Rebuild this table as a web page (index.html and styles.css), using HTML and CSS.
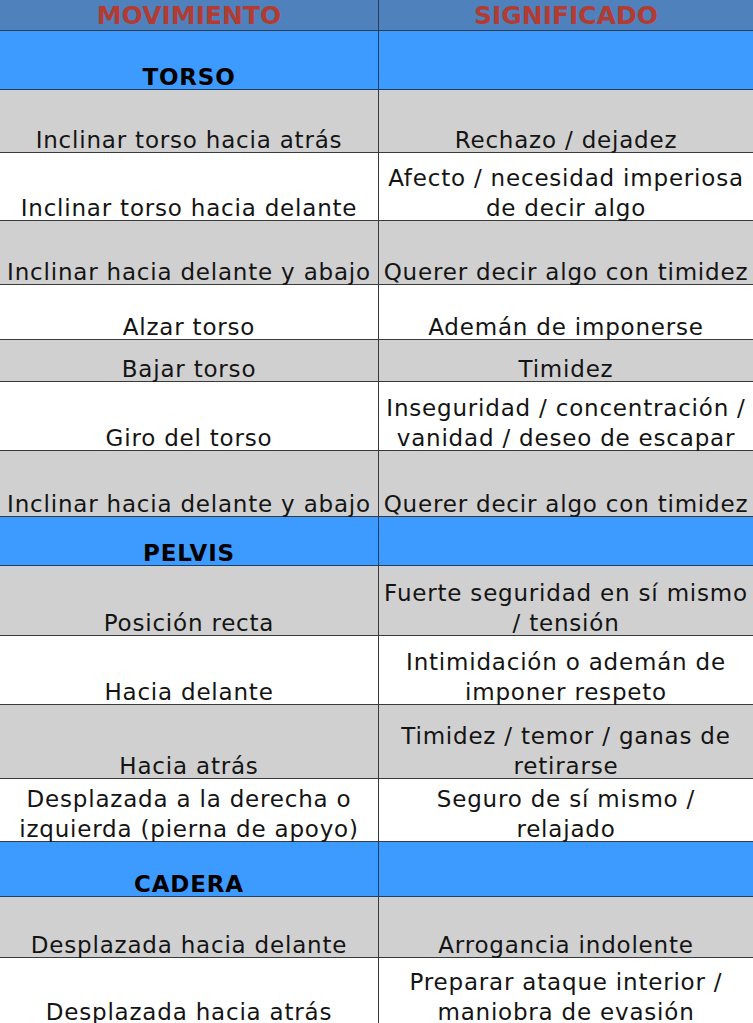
FILE: index.html
```html
<!DOCTYPE html>
<html lang="es">
<head>
<meta charset="utf-8">
<title>Movimiento y significado</title>
<link rel="stylesheet" href="styles.css">
</head>
<body>
<div class="sheet">
  <div class="row head h31">
    <div class="cell">MOVIMIENTO</div>
    <div class="cell">SIGNIFICADO</div>
  </div>
  <div class="row section h59">
    <div class="cell">TORSO</div>
    <div class="cell"></div>
  </div>
  <div class="row gray h63">
    <div class="cell">Inclinar torso hacia atrás</div>
    <div class="cell">Rechazo / dejadez</div>
  </div>
  <div class="row white h68">
    <div class="cell">Inclinar torso hacia delante</div>
    <div class="cell">Afecto / necesidad imperiosa<br>de decir algo</div>
  </div>
  <div class="row gray h64">
    <div class="cell">Inclinar hacia delante y abajo</div>
    <div class="cell">Querer decir algo con timidez</div>
  </div>
  <div class="row white h55">
    <div class="cell">Alzar torso</div>
    <div class="cell">Ademán de imponerse</div>
  </div>
  <div class="row gray h42">
    <div class="cell">Bajar torso</div>
    <div class="cell">Timidez</div>
  </div>
  <div class="row white h69">
    <div class="cell">Giro del torso</div>
    <div class="cell">Inseguridad / concentración /<br>vanidad / deseo de escapar</div>
  </div>
  <div class="row gray h66">
    <div class="cell">Inclinar hacia delante y abajo</div>
    <div class="cell">Querer decir algo con timidez</div>
  </div>
  <div class="row section h49">
    <div class="cell">PELVIS</div>
    <div class="cell"></div>
  </div>
  <div class="row gray h70">
    <div class="cell">Posición recta</div>
    <div class="cell">Fuerte seguridad en sí mismo<br>/ tensión</div>
  </div>
  <div class="row white h69">
    <div class="cell">Hacia delante</div>
    <div class="cell">Intimidación o ademán de<br>imponer respeto</div>
  </div>
  <div class="row gray h74">
    <div class="cell">Hacia atrás</div>
    <div class="cell">Timidez / temor / ganas de<br>retirarse</div>
  </div>
  <div class="row white h63">
    <div class="cell">Desplazada a la derecha o<br>izquierda (pierna de apoyo)</div>
    <div class="cell">Seguro de sí mismo /<br>relajado</div>
  </div>
  <div class="row section h55">
    <div class="cell">CADERA</div>
    <div class="cell"></div>
  </div>
  <div class="row gray h61">
    <div class="cell">Desplazada hacia delante</div>
    <div class="cell">Arrogancia indolente</div>
  </div>
  <div class="row white h66 last">
    <div class="cell">Desplazada hacia atrás</div>
    <div class="cell">Preparar ataque interior /<br>maniobra de evasión</div>
  </div>
</div>
</body>
</html>
```

FILE: styles.css
```css
html, body {
  margin: 0;
  padding: 0;
  background: #ffffff;
}

.sheet {
  width: 753px;
  overflow: hidden;
  font-family: "DejaVu Sans", Verdana, sans-serif;
  font-size: 23px;
  letter-spacing: 0.8px;
  line-height: 30px;
  color: #141414;
}

.row {
  display: grid;
  grid-template-columns: 378px 1fr;
  box-sizing: border-box;
  border-bottom: 1px solid #3a3a3a;
}

.row.last {
  border-bottom: none;
}

.cell {
  display: flex;
  align-items: flex-end;
  justify-content: center;
  text-align: center;
  white-space: nowrap;
  margin-bottom: -3px;
}

.cell + .cell {
  border-left: 1px solid #3a3a3a;
}

.head {
  background: #4f81bd;
  border-bottom-color: #2b3d55;
}

.head .cell {
  align-items: center;
  margin-bottom: 0;
  font-weight: bold;
  font-size: 25px;
  letter-spacing: 0;
  color: #b23b32;
  line-height: 31px;
}

.head .cell + .cell {
  border-left-color: #2b3d55;
}

.section {
  background: #3d9bff;
  border-bottom-color: #1d3f66;
}

.section .cell {
  font-weight: bold;
  color: #000000;
}

.section .cell + .cell {
  border-left-color: #1d3f66;
}

.gray {
  background: #d0d0d0;
}

.white {
  background: #ffffff;
}

.h31 { height: 31px; }
.h42 { height: 42px; }
.h49 { height: 49px; }
.h55 { height: 55px; }
.h59 { height: 59px; }
.h61 { height: 61px; }
.h63 { height: 63px; }
.h64 { height: 64px; }
.h66 { height: 66px; }
.h68 { height: 68px; }
.h69 { height: 69px; }
.h70 { height: 70px; }
.h74 { height: 74px; }
```
